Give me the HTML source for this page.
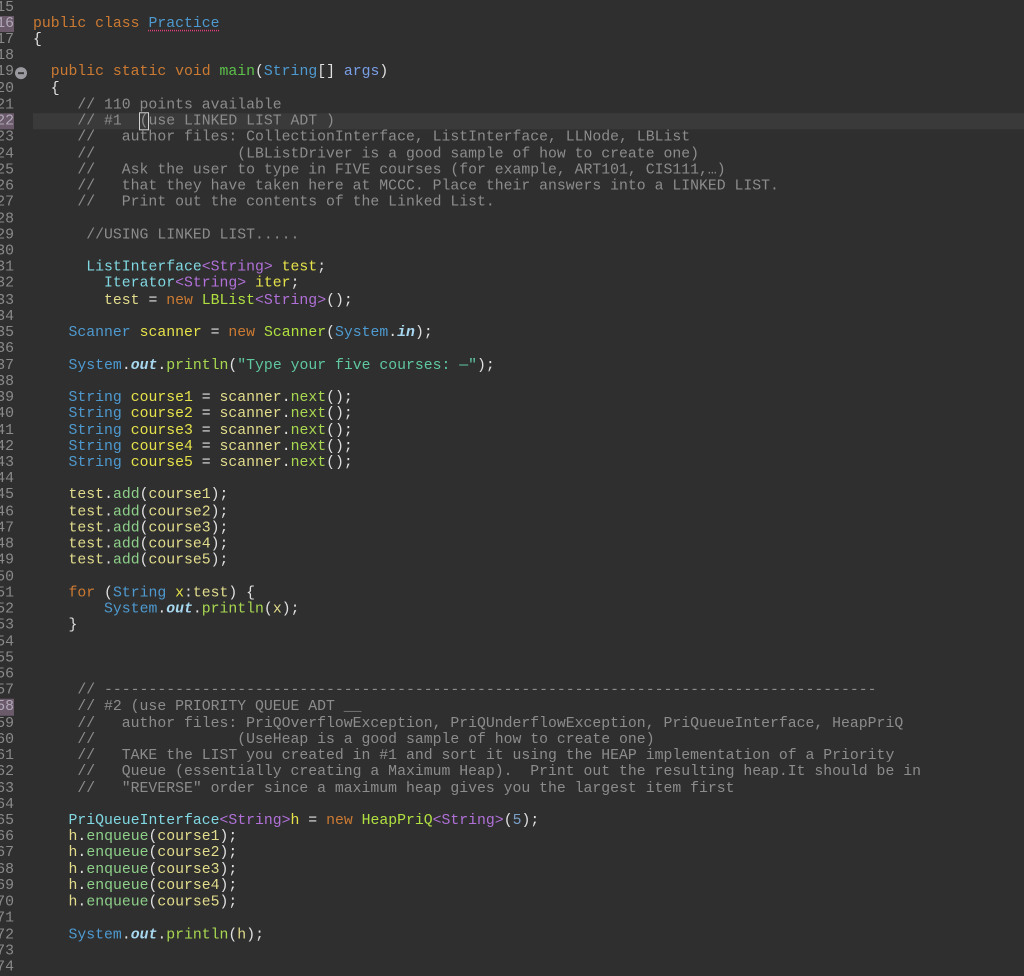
<!DOCTYPE html>
<html><head><meta charset="utf-8">
<style>
html,body{margin:0;padding:0;}
body{width:1024px;height:966px;background:#2f2f2f;overflow:hidden;position:relative;font-family:"Liberation Mono",monospace;font-size:14.8px;}
#w{position:absolute;left:0;top:0;width:1024px;height:966px;transform:translateY(2px) scaleY(1.0025);transform-origin:0 0;}
.ln{position:absolute;left:-5px;width:19px;text-align:right;color:#8a8a8a;height:16.23px;line-height:16.23px;white-space:pre;}
.ln.hl{background:#6a5a6a;color:#b0a8b8;left:-5px;width:19px;}
.l{position:absolute;left:33px;height:16.23px;line-height:16.23px;white-space:pre;color:#e0e0e0;}
.cur{position:absolute;left:33px;right:0;height:16.23px;background:#3a3a3a;}
.k{color:#cc7a32}.t{color:#4e9ad0}.i{color:#80d8e2}.g{color:#b070d8}.v{color:#e6e24a}.u{color:#e2dc8c}
.m{color:#a8d850}.e{color:#8ed08a}.s{color:#5fc8a0}.n{color:#7aa0c8}.c{color:#b0e040}.o{color:#a8d8f0;font-weight:bold;font-style:italic}
.cm{color:#8c8c8c}.mn{color:#5cc04a}.a{color:#7a9ee6}
.sq{text-decoration:underline dotted #e0407a;text-underline-offset:3px;}
.fold{position:absolute;left:15px;top:65px;width:12px;height:12px;border-radius:50%;background:#9a9aa0;}
.fold:after{content:"";position:absolute;left:3px;top:5px;width:6px;height:2px;background:#3a3a3a;}
.box{outline:1px solid #d0d0d0;}
</style></head><body><div id="w">
<div class="cur" style="top:111.1px"></div>
<div class="fold"></div>
<div class="ln" style="top:-2.5px">15</div>
<div class="ln hl" style="top:13.7px">16</div>
<div class="ln" style="top:30.0px">17</div>
<div class="ln" style="top:46.2px">18</div>
<div class="ln" style="top:62.4px">19</div>
<div class="ln" style="top:78.7px">20</div>
<div class="ln" style="top:94.9px">21</div>
<div class="ln hl" style="top:111.1px">22</div>
<div class="ln" style="top:127.3px">23</div>
<div class="ln" style="top:143.6px">24</div>
<div class="ln" style="top:159.8px">25</div>
<div class="ln" style="top:176.0px">26</div>
<div class="ln" style="top:192.3px">27</div>
<div class="ln" style="top:208.5px">28</div>
<div class="ln" style="top:224.7px">29</div>
<div class="ln" style="top:240.9px">30</div>
<div class="ln" style="top:257.2px">31</div>
<div class="ln" style="top:273.4px">32</div>
<div class="ln" style="top:289.6px">33</div>
<div class="ln" style="top:305.9px">34</div>
<div class="ln" style="top:322.1px">35</div>
<div class="ln" style="top:338.3px">36</div>
<div class="ln" style="top:354.6px">37</div>
<div class="ln" style="top:370.8px">38</div>
<div class="ln" style="top:387.0px">39</div>
<div class="ln" style="top:403.2px">40</div>
<div class="ln" style="top:419.5px">41</div>
<div class="ln" style="top:435.7px">42</div>
<div class="ln" style="top:451.9px">43</div>
<div class="ln" style="top:468.2px">44</div>
<div class="ln" style="top:484.4px">45</div>
<div class="ln" style="top:500.6px">46</div>
<div class="ln" style="top:516.8px">47</div>
<div class="ln" style="top:533.1px">48</div>
<div class="ln" style="top:549.3px">49</div>
<div class="ln" style="top:565.5px">50</div>
<div class="ln" style="top:581.8px">51</div>
<div class="ln" style="top:598.0px">52</div>
<div class="ln" style="top:614.2px">53</div>
<div class="ln" style="top:630.5px">54</div>
<div class="ln" style="top:646.7px">55</div>
<div class="ln" style="top:662.9px">56</div>
<div class="ln" style="top:679.1px">57</div>
<div class="ln hl" style="top:695.4px">58</div>
<div class="ln" style="top:711.6px">59</div>
<div class="ln" style="top:727.8px">60</div>
<div class="ln" style="top:744.1px">61</div>
<div class="ln" style="top:760.3px">62</div>
<div class="ln" style="top:776.5px">63</div>
<div class="ln" style="top:792.8px">64</div>
<div class="ln" style="top:809.0px">65</div>
<div class="ln" style="top:825.2px">66</div>
<div class="ln" style="top:841.4px">67</div>
<div class="ln" style="top:857.7px">68</div>
<div class="ln" style="top:873.9px">69</div>
<div class="ln" style="top:890.1px">70</div>
<div class="ln" style="top:906.4px">71</div>
<div class="ln" style="top:922.6px">72</div>
<div class="ln" style="top:938.8px">73</div>
<div class="ln" style="top:955.0px">74</div>

<div class="l" style="top:13.7px"><span class="k">public class</span> <span class="t sq">Practice</span></div>
<div class="l" style="top:30.0px">{</div>
<div class="l" style="top:62.4px">  <span class="k">public static void</span> <span class="mn">main</span>(<span class="t">String</span>[] <span class="a">args</span>)</div>
<div class="l" style="top:78.7px">  {</div>
<div class="l cm" style="top:94.9px">     // 110 points available</div>
<div class="l cm" style="top:111.1px">     // #1  <span class="box">(</span>use LINKED LIST ADT )</div>
<div class="l cm" style="top:127.3px">     //   author files: CollectionInterface, ListInterface, LLNode, LBList</div>
<div class="l cm" style="top:143.6px">     //                (LBListDriver is a good sample of how to create one)</div>
<div class="l cm" style="top:159.8px">     //   Ask the user to type in FIVE courses (for example, ART101, CIS111,…)</div>
<div class="l cm" style="top:176.0px">     //   that they have taken here at MCCC. Place their answers into a LINKED LIST.</div>
<div class="l cm" style="top:192.3px">     //   Print out the contents of the Linked List.</div>
<div class="l cm" style="top:224.7px">      //USING LINKED LIST.....</div>
<div class="l" style="top:257.2px">      <span class="i">ListInterface</span><span class="g">&lt;String&gt;</span> <span class="v">test</span>;</div>
<div class="l" style="top:273.4px">        <span class="i">Iterator</span><span class="g">&lt;String&gt;</span> <span class="v">iter</span>;</div>
<div class="l" style="top:289.6px">        <span class="u">test</span> = <span class="k">new</span> <span class="c">LBList</span><span class="g">&lt;String&gt;</span>();</div>
<div class="l" style="top:322.1px">    <span class="t">Scanner</span> <span class="v">scanner</span> = <span class="k">new</span> <span class="c">Scanner</span>(<span class="t">System</span>.<span class="o">in</span>);</div>
<div class="l" style="top:354.6px">    <span class="t">System</span>.<span class="o">out</span>.<span class="m">println</span>(<span class="s">"Type your five courses: —"</span>);</div>
<div class="l" style="top:387.0px">    <span class="t">String</span> <span class="v">course1</span> = <span class="u">scanner</span>.<span class="m">next</span>();</div>
<div class="l" style="top:403.2px">    <span class="t">String</span> <span class="v">course2</span> = <span class="u">scanner</span>.<span class="m">next</span>();</div>
<div class="l" style="top:419.5px">    <span class="t">String</span> <span class="v">course3</span> = <span class="u">scanner</span>.<span class="m">next</span>();</div>
<div class="l" style="top:435.7px">    <span class="t">String</span> <span class="v">course4</span> = <span class="u">scanner</span>.<span class="m">next</span>();</div>
<div class="l" style="top:451.9px">    <span class="t">String</span> <span class="v">course5</span> = <span class="u">scanner</span>.<span class="m">next</span>();</div>
<div class="l" style="top:484.4px">    <span class="u">test</span>.<span class="e">add</span>(<span class="u">course1</span>);</div>
<div class="l" style="top:500.6px">    <span class="u">test</span>.<span class="e">add</span>(<span class="u">course2</span>);</div>
<div class="l" style="top:516.8px">    <span class="u">test</span>.<span class="e">add</span>(<span class="u">course3</span>);</div>
<div class="l" style="top:533.1px">    <span class="u">test</span>.<span class="e">add</span>(<span class="u">course4</span>);</div>
<div class="l" style="top:549.3px">    <span class="u">test</span>.<span class="e">add</span>(<span class="u">course5</span>);</div>
<div class="l" style="top:581.8px">    <span class="k">for</span> (<span class="t">String</span> <span class="v">x</span>:<span class="u">test</span>) {</div>
<div class="l" style="top:598.0px">        <span class="t">System</span>.<span class="o">out</span>.<span class="m">println</span>(<span class="u">x</span>);</div>
<div class="l" style="top:614.2px">    }</div>
<div class="l cm" style="top:679.1px">     // ---------------------------------------------------------------------------------------</div>
<div class="l cm" style="top:695.4px">     // #2 (use PRIORITY QUEUE ADT __</div>
<div class="l cm" style="top:711.6px">     //   author files: PriQOverflowException, PriQUnderflowException, PriQueueInterface, HeapPriQ</div>
<div class="l cm" style="top:727.8px">     //                (UseHeap is a good sample of how to create one)</div>
<div class="l cm" style="top:744.1px">     //   TAKE the LIST you created in #1 and sort it using the HEAP implementation of a Priority</div>
<div class="l cm" style="top:760.3px">     //   Queue (essentially creating a Maximum Heap).  Print out the resulting heap.It should be in</div>
<div class="l cm" style="top:776.5px">     //   "REVERSE" order since a maximum heap gives you the largest item first</div>
<div class="l" style="top:809.0px">    <span class="i">PriQueueInterface</span><span class="g">&lt;String&gt;</span><span class="v">h</span> = <span class="k">new</span> <span class="c">HeapPriQ</span><span class="g">&lt;String&gt;</span>(<span class="n">5</span>);</div>
<div class="l" style="top:825.2px">    <span class="u">h</span>.<span class="e">enqueue</span>(<span class="u">course1</span>);</div>
<div class="l" style="top:841.4px">    <span class="u">h</span>.<span class="e">enqueue</span>(<span class="u">course2</span>);</div>
<div class="l" style="top:857.7px">    <span class="u">h</span>.<span class="e">enqueue</span>(<span class="u">course3</span>);</div>
<div class="l" style="top:873.9px">    <span class="u">h</span>.<span class="e">enqueue</span>(<span class="u">course4</span>);</div>
<div class="l" style="top:890.1px">    <span class="u">h</span>.<span class="e">enqueue</span>(<span class="u">course5</span>);</div>
<div class="l" style="top:922.6px">    <span class="t">System</span>.<span class="o">out</span>.<span class="m">println</span>(<span class="u">h</span>);</div>
</div></body></html>
